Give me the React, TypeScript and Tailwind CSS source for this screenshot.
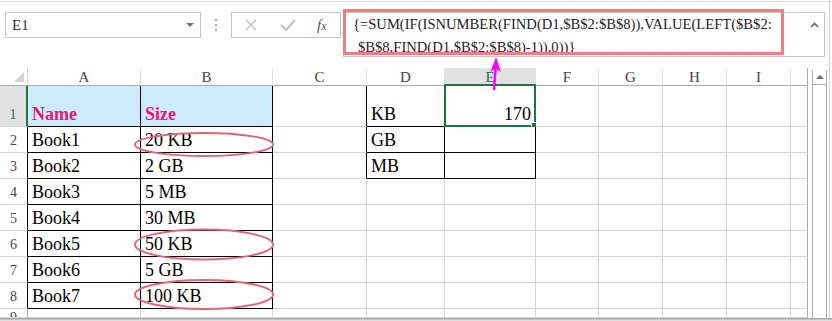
import React from 'react';

const HEADERS = ['', 'A', 'B', 'C', 'D', 'E', 'F', 'G', 'H', 'I', ''];
const ROWS = [1, 2, 3, 4, 5, 6, 7, 8, 9];

const CELLS: Record<string, string> = {
  '1,1': 'Name',
  '2,1': 'Size',
  '1,2': 'Book1', '2,2': '20 KB',
  '1,3': 'Book2', '2,3': '2 GB',
  '1,4': 'Book3', '2,4': '5 MB',
  '1,5': 'Book4', '2,5': '30 MB',
  '1,6': 'Book5', '2,6': '50 KB',
  '1,7': 'Book6', '2,7': '5 GB',
  '1,8': 'Book7', '2,8': '100 KB',
  '4,1': 'KB', '4,2': 'GB', '4,3': 'MB',
  '5,1': '170',
};

// cells that carry the black table borders
const inTable = (c: number, r: number) =>
  (c >= 1 && c <= 2 && r >= 1 && r <= 8) || (c >= 4 && c <= 5 && r >= 1 && r <= 3);

function Cell({ c, r }: { c: number; r: number }) {
  const text = CELLS[`${c},${r}`];
  const right = inTable(c, r) || inTable(c + 1, r) ? 'border-r-black' : 'border-r-[#d4d4d4]';
  const bottom = inTable(c, r) || inTable(c, r + 1) ? 'border-b-black' : 'border-b-[#d4d4d4]';
  const header = r === 1 && c <= 2;
  const bg = header ? 'bg-[#ccebfc]' : 'bg-white';
  const isE1 = c === 5 && r === 1;

  return (
    <div
      className={`relative flex items-end border-r border-b ${right} ${bottom} ${bg} ${
        isE1 ? 'justify-end pr-[4px]' : 'pl-[4px]'
      } pb-[2px] text-[18px] leading-[20px] text-black whitespace-nowrap`}
    >
      {header ? <span className="font-bold text-[#f2136f]">{text}</span> : text}
      {isE1 && (
        <div className="absolute -left-[1px] -top-[2px] -right-[1px] -bottom-[1px] border-2 border-[#217346]">
          <div className="absolute -right-[4px] -bottom-[4px] w-[7px] h-[7px] bg-[#217346] border border-white" />
        </div>
      )}
    </div>
  );
}

function RowHeader({ r }: { r: number }) {
  const selected = r === 1;
  const right = selected
    ? 'border-r-2 border-r-[#217346]'
    : r <= 8
    ? 'border-r border-r-black'
    : 'border-r border-r-[#ababab]';
  return (
    <div
      className={`flex justify-center ${r === 9 ? 'items-start pt-[1px]' : 'items-end pb-[3px]'} overflow-hidden border-b border-b-[#d4d4d4] ${right} ${
        selected ? 'bg-[#e1e1e1] text-[#217346]' : 'bg-white text-[#444]'
      } text-[14px] leading-[16px]`}
    >
      {r}
    </div>
  );
}

function ColHeader({ c }: { c: number }) {
  const selected = c === 5;
  if (c === 0) {
    return (
      <div className="relative border-r border-r-[#d4d4d4] border-b border-b-[#ababab] bg-white">
        <div className="absolute right-[3px] bottom-[3px] w-0 h-0 border-l-[10px] border-l-transparent border-b-[10px] border-b-[#d6d6d6]" />
      </div>
    );
  }
  return (
    <div
      className={`flex items-center justify-center border-r ${c === 10 ? 'border-r-[#ababab]' : 'border-r-[#e1e1e1]'} border-b border-b-[#ababab] ${
        selected ? 'bg-[#e1e1e1] text-[#217346]' : 'bg-white text-[#444]'
      } text-[15px] leading-[16px] pt-[1px]`}
    >
      {HEADERS[c]}
    </div>
  );
}

function FormulaBar() {
  return (
    <div className="flex items-start mt-[10px] h-[45px]">
      {/* Name box */}
      <div className="ml-[5px] w-[196px] h-[26px] border border-[#c6c6c6] flex items-center justify-between pl-[6px] pr-[6px] text-[15px] text-[#333]">
        <span>E1</span>
        <span className="w-0 h-0 border-l-[4px] border-r-[4px] border-t-[4px] border-l-transparent border-r-transparent border-t-[#777]" />
      </div>
      <div className="w-[30px] h-[26px] flex flex-col items-center justify-center gap-[3px]">
        <span className="w-[2px] h-[2px] bg-[#aaa]" />
        <span className="w-[2px] h-[2px] bg-[#aaa]" />
        <span className="w-[2px] h-[2px] bg-[#aaa]" />
      </div>
      {/* cancel / enter / fx */}
      <div className="w-[110px] h-[26px] border border-[#c6c6c6] flex items-center pl-[13px] gap-[23px]">
        <svg width="12" height="12" viewBox="0 0 12 12">
          <path d="M1 1 L11 11 M11 1 L1 11" stroke="#c3c3c3" strokeWidth="1.5" fill="none" />
        </svg>
        <svg width="16" height="12" viewBox="0 0 16 12">
          <path d="M1 6 L6 11 L15 1" stroke="#c3c3c3" strokeWidth="2" fill="none" />
        </svg>
        <span className="italic text-[15px] text-[#555] leading-none -ml-[2px]">
          f<span className="text-[12px]">x</span>
        </span>
      </div>
      {/* formula box */}
      <div className="relative ml-[2px] w-[482px] h-[45px] border border-[#c6c6c6] text-[14.6px] leading-[23px] text-[#222]">
        <div className="pl-[9px] pt-[0px] whitespace-nowrap">
          {'{=SUM(IF(ISNUMBER(FIND(D1,$B$2:$B$8)),VALUE(LEFT($B$2:'}
        </div>
        <div className="pl-[14px] whitespace-nowrap">{'$B$8,FIND(D1,$B$2:$B$8)-1)),0))}'}</div>
        <svg className="absolute right-[5px] top-[9px]" width="9" height="6" viewBox="0 0 9 6">
          <path d="M1 5 L4.5 1.5 L8 5" stroke="#666" strokeWidth="1.6" fill="none" />
        </svg>
        <div className="absolute -left-[1px] -top-[4px] w-[441px] h-[46px] border-[3px] border-[#f47c80]" />
      </div>
    </div>
  );
}

export default function App() {
  return (
    <div className="relative w-[832px] h-[321px] bg-white overflow-hidden flex flex-col font-['Liberation_Serif',serif]">
      <div className="h-[2px] border-b border-[#dadada] shrink-0" />
      <FormulaBar />

      <div className="flex mt-[11px] h-[250px] shrink-0">
        <div className="grid grid-cols-[28px_113px_132px_94px_78px_91px_63px_64px_64px_64px_17px] grid-rows-[18px_41px_26px_26px_26px_26px_26px_26px_26px_9px] w-[808px]">
          {HEADERS.map((_, c) => (
            <ColHeader key={`h${c}`} c={c} />
          ))}
          {ROWS.map((r) => (
            <React.Fragment key={r}>
              <RowHeader r={r} />
              {HEADERS.slice(1).map((_, i) => {
                const c = i + 1;
                if (c === 10) {
                  return (
                    <div key={c} className="border-r border-r-[#ababab] border-b border-b-[#d4d4d4] bg-white" />
                  );
                }
                return <Cell key={c} c={c} r={r} />;
              })}
            </React.Fragment>
          ))}
        </div>

        {/* vertical scrollbar */}
        <div className="ml-[4px] mt-[2px] w-[15px] border-x border-[#ababab] flex flex-col">
          <div className="h-[15px] border-b border-[#ababab] flex items-center justify-center">
            <span className="w-0 h-0 border-l-[4px] border-r-[4px] border-b-[4px] border-l-transparent border-r-transparent border-b-[#666]" />
          </div>
        </div>
        <div className="ml-[2px] w-[1px] -mt-[70px] h-[320px] bg-[#d4d4d4]" />
      </div>

      <div className="h-[3px] shrink-0 bg-linear-to-b from-[#9c9c9c] to-[#ececec]" />

      {/* annotations */}
      <svg className="absolute inset-0 pointer-events-none" width="832" height="321" viewBox="0 0 832 321">
        <ellipse cx="204" cy="144.5" rx="69" ry="11.5" fill="none" stroke="#e0657a" strokeWidth="2" />
        <ellipse cx="204" cy="244.5" rx="69" ry="15" fill="none" stroke="#e0657a" strokeWidth="2" />
        <ellipse cx="204" cy="294.5" rx="69" ry="14.5" fill="none" stroke="#e0657a" strokeWidth="2" />
        <path d="M494 90 L495.6 68" stroke="#ff00ff" strokeWidth="2.5" fill="none" />
        <polygon points="496,57 490.5,72 495.6,68.5 501,72" fill="#ff00ff" />
      </svg>
    </div>
  );
}
